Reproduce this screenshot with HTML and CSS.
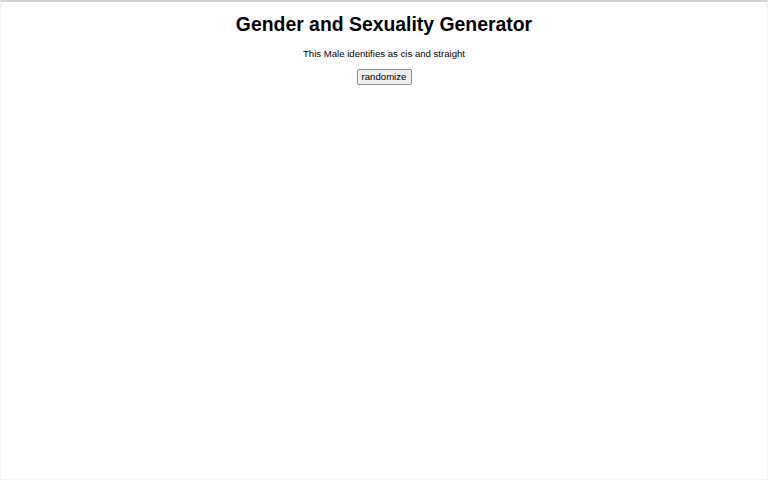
FILE: index.html
```html
<!DOCTYPE html>
<html>
<head>
<meta charset="utf-8">
<link rel="stylesheet" href="styles.css">
</head>
<body>
<div class="page">
  <h1 class="title">Gender and Sexuality Generator</h1>
  <p class="result">This Male identifies as cis and straight</p>
  <button class="btn">randomize</button>
</div>
</body>
</html>
```
FILE: styles.css
```css
html, body {
  margin: 0;
  padding: 0;
  background: #ffffff;
}
body {
  font-family: "Liberation Sans", Arial, sans-serif;
  color: #000;
}
.page {
  box-sizing: border-box;
  height: 480px;
  border-top: 2px solid #d4d4d4;
  border-left: 1px solid #f4f4f4;
  border-right: 1px solid #f4f4f4;
  border-bottom: 1px solid #f4f4f4;
  display: flex;
  flex-direction: column;
  align-items: center;
  text-align: center;
}
.title {
  font-size: 19.4px;
  font-weight: bold;
  margin: 11px 0 0;
  line-height: 22px;
}
.result {
  font-size: 9.6px;
  margin: 13px 0 0;
  line-height: 12px;
}
.btn {
  margin-top: 9px;
  font-family: "Liberation Sans", Arial, sans-serif;
  font-size: 9.6px;
  padding: 1px 4px;
  background: #efefef;
  border: 1px solid #8f8f8f;
  border-radius: 2px;
  color: #000;
  line-height: 12px;
  min-width: 55px;
}
```
